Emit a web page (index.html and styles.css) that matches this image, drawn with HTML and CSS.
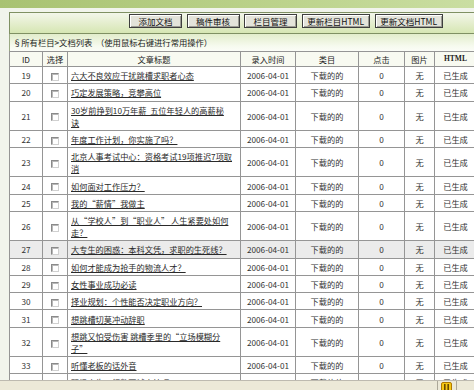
FILE: index.html
```html
<!DOCTYPE html>
<html lang="zh-CN">
<head>
<meta charset="utf-8">
<title>文档列表</title>
<link rel="stylesheet" href="styles.css">
</head>
<body>
<div class="topbar"></div>
<div class="main">
  <div class="toolbar">
    <button class="btn">添加文档</button>
    <button class="btn">稿件审核</button>
    <button class="btn">栏目管理</button>
    <button class="btn btn-wide">更新栏目HTML</button>
    <button class="btn btn-wide">更新文档HTML</button>
  </div>
  <div class="section-title">§所有栏目&gt;文档列表 &nbsp;（使用鼠标右键进行常用操作）</div>
  <table class="list">
    <colgroup>
      <col class="c-id"><col class="c-sel"><col class="c-title"><col class="c-date"><col class="c-cat"><col class="c-click"><col class="c-pic"><col class="c-html">
    </colgroup>
    <thead>
      <tr><th>ID</th><th>选择</th><th>文章标题</th><th>录入时间</th><th>类目</th><th>点击</th><th>图片</th><th class="html">HTML</th></tr>
    </thead>
    <tbody>
      <tr><td>19</td><td><span class="chk"></span></td><td class="t"><a href="#">六大不良效应干扰跳槽求职者心态</a></td><td>2006-04-01</td><td>下载的的</td><td>0</td><td>无</td><td>已生成</td></tr>
      <tr><td>20</td><td><span class="chk"></span></td><td class="t"><a href="#">巧定发展策略，竞攀高位</a></td><td>2006-04-01</td><td>下载的的</td><td>0</td><td>无</td><td>已生成</td></tr>
      <tr><td>21</td><td><span class="chk"></span></td><td class="t"><a href="#">30岁前挣到10万年薪 &nbsp;五位年轻人的高薪秘<br>诀</a></td><td>2006-04-01</td><td>下载的的</td><td>0</td><td>无</td><td>已生成</td></tr>
      <tr><td>22</td><td><span class="chk"></span></td><td class="t"><a href="#">年度工作计划，你实施了吗？</a></td><td>2006-04-01</td><td>下载的的</td><td>0</td><td>无</td><td>已生成</td></tr>
      <tr><td>23</td><td><span class="chk"></span></td><td class="t"><a href="#">北京人事考试中心：资格考试19项推迟7项取<br>消</a></td><td>2006-04-01</td><td>下载的的</td><td>0</td><td>无</td><td>已生成</td></tr>
      <tr><td>24</td><td><span class="chk"></span></td><td class="t"><a href="#">如何面对工作压力？</a></td><td>2006-04-01</td><td>下载的的</td><td>0</td><td>无</td><td>已生成</td></tr>
      <tr><td>25</td><td><span class="chk"></span></td><td class="t"><a href="#">我的“薪情”我做主</a></td><td>2006-04-01</td><td>下载的的</td><td>0</td><td>无</td><td>已生成</td></tr>
      <tr><td>26</td><td><span class="chk"></span></td><td class="t"><a href="#">从“学校人”到“职业人” 人生紧要处如何<br>走？</a></td><td>2006-04-01</td><td>下载的的</td><td>0</td><td>无</td><td>已生成</td></tr>
      <tr class="hl"><td>27</td><td><span class="chk"></span></td><td class="t"><a href="#">大专生的困惑：本科文凭，求职的生死线？</a></td><td>2006-04-01</td><td>下载的的</td><td>0</td><td>无</td><td>已生成</td></tr>
      <tr><td>28</td><td><span class="chk"></span></td><td class="t"><a href="#">如何才能成为抢手的物流人才？</a></td><td>2006-04-01</td><td>下载的的</td><td>0</td><td>无</td><td>已生成</td></tr>
      <tr><td>29</td><td><span class="chk"></span></td><td class="t"><a href="#">女性事业成功必读</a></td><td>2006-04-01</td><td>下载的的</td><td>0</td><td>无</td><td>已生成</td></tr>
      <tr><td>30</td><td><span class="chk"></span></td><td class="t"><a href="#">择业规划：个性能否决定职业方向？</a></td><td>2006-04-01</td><td>下载的的</td><td>0</td><td>无</td><td>已生成</td></tr>
      <tr><td>31</td><td><span class="chk"></span></td><td class="t"><a href="#">想跳槽切莫冲动辞职</a></td><td>2006-04-01</td><td>下载的的</td><td>0</td><td>无</td><td>已生成</td></tr>
      <tr><td>32</td><td><span class="chk"></span></td><td class="t"><a href="#">想跳又怕受伤害 跳槽季里的“立场模糊分<br>子”</a></td><td>2006-04-01</td><td>下载的的</td><td>0</td><td>无</td><td>已生成</td></tr>
      <tr><td>33</td><td><span class="chk"></span></td><td class="t"><a href="#">听懂老板的话外音</a></td><td>2006-04-01</td><td>下载的的</td><td>0</td><td>无</td><td>已生成</td></tr>
      <tr><td>34</td><td><span class="chk"></span></td><td class="t"><a href="#">职场忠告：细数面试小技巧</a></td><td>2006-04-01</td><td>下载的的</td><td>0</td><td>无</td><td>已生成</td></tr>
    </tbody>
  </table>
</div>
<div class="statusbar">
  <div class="sb-main"></div>
  <div class="sb-icon">
    <svg width="11" height="10" viewBox="0 0 11 10"><rect x="0.5" y="0.5" width="10" height="11" rx="1.5" fill="#f5c814" stroke="#b07a00"/><rect x="3" y="2" width="1.6" height="6" fill="#6a4a00"/><rect x="6.4" y="2" width="1.6" height="6" fill="#6a4a00"/></svg>
  </div>
  <div class="sb-pane"></div>
</div>
</body>
</html>
```
FILE: styles.css
```css
html, body {
  margin: 0;
  padding: 0;
}
body {
  width: 474px;
  height: 390px;
  overflow: hidden;
  background: #f1f4ec;
  font-family: "Noto Sans CJK SC", "Liberation Sans", sans-serif;
  font-size: 8.2px;
  color: #222;
}
.topbar {
  height: 8px;
  background: linear-gradient(to right, #a8c272, #bcd38c 60%, #cadea2);
}
.main {
  padding: 4px 0 0 9px;
}
.toolbar {
  box-sizing: border-box;
  width: 467px;
  height: 22px;
  border: 1px solid #7f9063;
  background: linear-gradient(to bottom, #f3f6ea, #d6e6b3);
  display: flex;
  justify-content: flex-end;
  align-items: flex-start;
  gap: 4.5px;
  padding: 1px 32px 0 0;
}
.btn {
  box-sizing: border-box;
  width: 53px;
  height: 14px;
  padding: 0;
  margin: 0;
  border: 1px solid #3e3e3e;
  background: #e3e3da;
  box-shadow: inset 1px 1px #ffffff, inset -1px -1px #9c9c94;
  font-family: "Noto Sans CJK SC", "Liberation Sans", sans-serif;
  font-size: 8.5px;
  line-height: 12px;
  color: #111;
  text-align: center;
}
.btn-wide {
  width: 68.5px;
}
.section-title {
  box-sizing: border-box;
  width: 467px;
  height: 17px;
  border-left: 1px solid #9aa884;
  background: linear-gradient(to bottom, #e2edcb, #f6faee 70%, #fbfdf7);
  padding: 2px 0 0 3px;
  line-height: 12px;
  font-size: 8.3px;
  color: #222;
}
.list {
  border-collapse: collapse;
  table-layout: fixed;
  width: 467px;
  background: #fff;
}
.c-id { width: 33px; }
.c-sel { width: 25px; }
.c-title { width: 173px; }
.c-date { width: 55px; }
.c-cat { width: 63px; }
.c-click { width: 46px; }
.c-pic { width: 30px; }
.c-html { width: 42px; }
.list th,
.list td {
  border: 1px solid #959595;
  line-height: 12px;
  text-align: center;
  vertical-align: middle;
  white-space: normal;
  overflow: hidden;
}
.list th {
  padding: 1px 0;
  font-weight: normal;
  background: #f8faf1;
  color: #222;
}
.list th.html {
  font-family: "Liberation Serif", serif;
  font-weight: bold;
  font-size: 7.5px;
}
.list td {
  padding: 2.15px 1px;
  color: #333;
}
.list td.t {
  text-align: left;
  padding-left: 3px;
  padding-right: 0;
}
.list td.t a {
  color: #2a2a2a;
  text-decoration: underline;
}
.list tr.hl td {
  background: #ebebeb;
}
.chk {
  display: inline-block;
  box-sizing: border-box;
  width: 8px;
  height: 8px;
  vertical-align: middle;
  border: 1px solid #8a8a8a;
  border-right-color: #d0d0d0;
  border-bottom-color: #d0d0d0;
  background: #fff;
  box-shadow: inset 1px 1px #b8b8b8;
}
.statusbar {
  position: fixed;
  left: 0;
  right: 0;
  bottom: 0;
  height: 10px;
  box-sizing: border-box;
  border-top: 1px solid #bdbab0;
  background: #ece9d8;
  display: flex;
  align-items: flex-start;
}
.sb-main {
  flex: 1;
  height: 9px;
  border-right: 1px solid #aca899;
  margin-right: 3px;
}
.sb-icon {
  width: 11px;
  height: 9px;
  overflow: hidden;
  padding-top: 1px;
  margin-right: 4px;
}
.sb-pane {
  width: 17px;
  height: 9px;
  border-left: 1px solid #aca899;
}
```
